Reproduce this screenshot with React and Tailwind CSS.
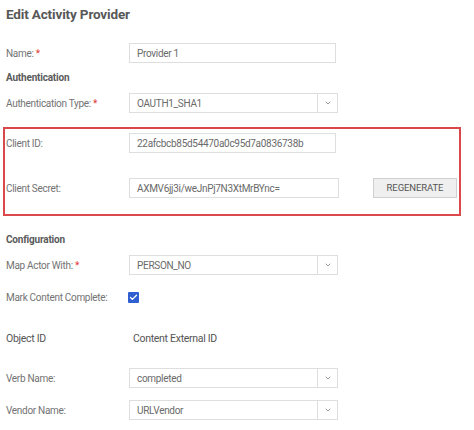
import { Check, ChevronDown } from 'lucide-react';

function Label({ children, required }) {
  return (
    <div className="w-[123px] shrink-0 text-[10px] tracking-[-0.3px] text-[#737373]">
      {children}
      {required && <span className="text-[#e53935]"> *</span>}
    </div>
  );
}

function TextBox({ value, width = 'w-[207px]' }) {
  return (
    <div className={`${width} h-[20px] border border-[#dedede] bg-white flex items-center pl-[7px] text-[10px] tracking-[-0.3px] text-[#6a6a6a]`}>
      {value}
    </div>
  );
}

function SelectBox({ value }) {
  return (
    <div className="w-[209px] h-[20px] border border-[#dedede] bg-white flex items-stretch text-[10px] tracking-[-0.3px] text-[#6a6a6a]">
      <div className="flex-1 flex items-center pl-[7px]">{value}</div>
      <div className="w-[20px] border-l border-[#dedede] flex items-center justify-center">
        <ChevronDown size={8} strokeWidth={2.5} className="text-[#888]" />
      </div>
    </div>
  );
}

function Heading({ children, className = '' }) {
  return (
    <div className={`h-[14px] flex items-center text-[10px] tracking-[-0.2px] font-bold text-[#5a5a5a] ${className}`}>
      {children}
    </div>
  );
}

export default function App() {
  return (
    <div className="w-[474px] h-[430px] bg-white overflow-hidden pl-[6px] font-['Roboto',sans-serif]">
      <h1 className="h-[28px] flex items-center text-[13.5px] tracking-[-0.15px] font-bold text-[#585858]">Edit Activity Provider</h1>

      <div className="mt-[15px] h-[20px] flex items-center">
        <Label required>Name:</Label>
        <TextBox value="Provider 1" />
      </div>

      <Heading className="mt-[7px]">Authentication</Heading>

      <div className="mt-[9px] h-[20px] flex items-center">
        <Label required>Authentication Type:</Label>
        <SelectBox value="OAUTH1_SHA1" />
      </div>

      <div className="mt-[14px] ml-[-3px] w-[458px] border-2 border-[#d9484a] pl-[1px] pt-[4px] pb-[16px]">
        <div className="h-[20px] flex items-center">
          <Label>Client ID:</Label>
          <TextBox value="22afcbcb85d54470a0c95d7a0836738b" />
        </div>
        <div className="mt-[25px] h-[20px] flex items-center">
          <Label>Client Secret:</Label>
          <TextBox value="AXMV6jj3i/weJnPj7N3XtMrBYnc=" width="w-[210px]" />
          <button className="ml-[34px] w-[84px] h-[20px] border border-[#cfcfcf] bg-[#efefef] text-[9.5px] tracking-[-0.1px] text-[#555] flex items-center justify-center">
            REGENERATE
          </button>
        </div>
      </div>

      <Heading className="mt-[16px]">Configuration</Heading>

      <div className="mt-[9px] h-[20px] flex items-center">
        <Label required>Map Actor With:</Label>
        <SelectBox value="PERSON_NO" />
      </div>

      <div className="mt-[12px] h-[20px] flex items-center">
        <Label>Mark Content Complete:</Label>
        <div className="w-[11px] h-[11px] ml-[-1px] rounded-[1px] bg-[#2f5fd0] flex items-center justify-center">
          <Check size={9} strokeWidth={3.5} className="text-white" />
        </div>
      </div>

      <div className="mt-[25px] h-[14px] flex items-center text-[10.5px] tracking-[-0.3px] text-[#555]">
        <div className="w-[127px] shrink-0">Object ID</div>
        <div>Content External ID</div>
      </div>

      <div className="mt-[22px] h-[20px] flex items-center">
        <Label>Verb Name:</Label>
        <SelectBox value="completed" />
      </div>

      <div className="mt-[12px] h-[20px] flex items-center">
        <Label>Vendor Name:</Label>
        <SelectBox value="URLVendor" />
      </div>
    </div>
  );
}
